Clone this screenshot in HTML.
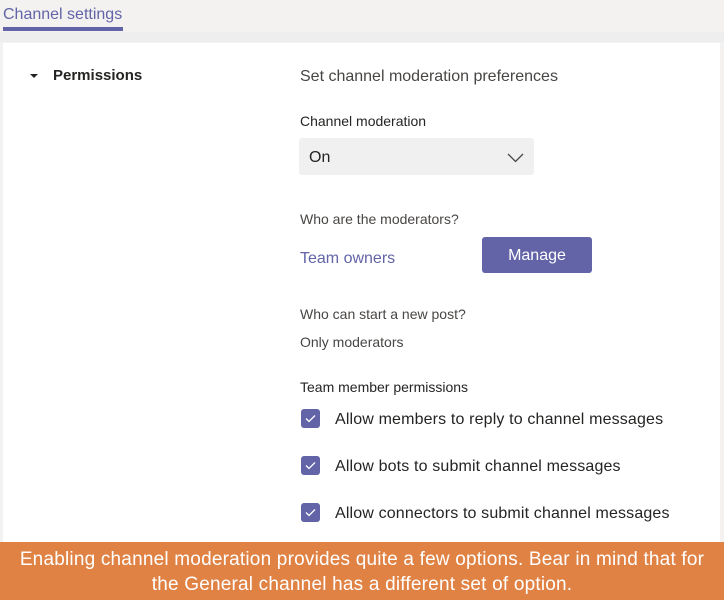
<!DOCTYPE html>
<html><head><meta charset="utf-8"><style>
*{margin:0;padding:0;box-sizing:border-box}
body{width:724px;height:600px;overflow:hidden;background:#f3f2f1;font-family:"Liberation Sans",sans-serif;color:#252423;position:relative}
.a{position:absolute;white-space:nowrap}
.panel{position:absolute;left:3px;top:43px;width:717px;height:520px;background:#fff}
.cb{position:absolute;left:301px;width:19px;height:19px;background:#6264a7;border-radius:3px}
.cb svg{position:absolute;left:4px;top:5px}
.lbl{font-size:16px;left:335px;color:#252423;letter-spacing:0.15px}
.banner{position:absolute;left:0;top:542px;width:724px;height:58px;background:#e08244;color:#fff;font-size:19px;letter-spacing:0.2px;text-align:center;line-height:25px;padding-top:5px}
</style></head><body>
<div class="a" style="left:3px;top:6px;font-size:16px;color:#6264a7">Channel settings</div>
<div class="a" style="left:3px;top:27px;width:120px;height:4px;background:#6264a7"></div>
<div style="position:absolute;left:0;top:32px;width:724px;height:10px;background:#efeeee"></div>
<div class="panel"></div>
<div class="a" style="left:30px;top:74px;width:0;height:0;border-left:4px solid transparent;border-right:4px solid transparent;border-top:4px solid #252423"></div>
<div class="a" style="left:53px;top:67px;font-size:15px;font-weight:bold">Permissions</div>
<div class="a" style="left:300px;top:68px;font-size:16px;color:#484644">Set channel moderation preferences</div>
<div class="a" style="left:300px;top:113px;font-size:14px">Channel moderation</div>
<div class="a" style="left:299px;top:138px;width:235px;height:37px;background:#f0f0f0;border-radius:3px"></div>
<div class="a" style="left:309px;top:149px;font-size:16px">On</div>
<svg class="a" style="left:507px;top:153px" width="17" height="10"><path d="M1 1 L8.5 8.5 L16 1" fill="none" stroke="#484644" stroke-width="1.3"/></svg>
<div class="a" style="left:300px;top:211px;font-size:14px;color:#484644">Who are the moderators?</div>
<div class="a" style="left:300px;top:250px;font-size:16px;color:#6264a7">Team owners</div>
<div class="a" style="left:482px;top:237px;width:110px;height:36px;background:#6264a7;border-radius:3px;color:#fff;font-size:16px;text-align:center;line-height:38px">Manage</div>
<div class="a" style="left:300px;top:306px;font-size:14px;color:#484644">Who can start a new post?</div>
<div class="a" style="left:300px;top:334px;font-size:14px;color:#484644">Only moderators</div>
<div class="a" style="left:300px;top:379px;font-size:14px">Team member permissions</div>
<div class="cb" style="top:409px"><svg width="11" height="9"><path d="M1 4.5 L4 7.5 L10 1.5" fill="none" stroke="#fff" stroke-width="1.3"/></svg></div>
<div class="a lbl" style="top:411px">Allow members to reply to channel messages</div>
<div class="cb" style="top:456px"><svg width="11" height="9"><path d="M1 4.5 L4 7.5 L10 1.5" fill="none" stroke="#fff" stroke-width="1.3"/></svg></div>
<div class="a lbl" style="top:458px">Allow bots to submit channel messages</div>
<div class="cb" style="top:503px"><svg width="11" height="9"><path d="M1 4.5 L4 7.5 L10 1.5" fill="none" stroke="#fff" stroke-width="1.3"/></svg></div>
<div class="a lbl" style="top:505px">Allow connectors to submit channel messages</div>
<div class="banner">Enabling channel moderation provides quite a few options. Bear in mind that for<br>the General channel has a different set of option.</div>
</body></html>
